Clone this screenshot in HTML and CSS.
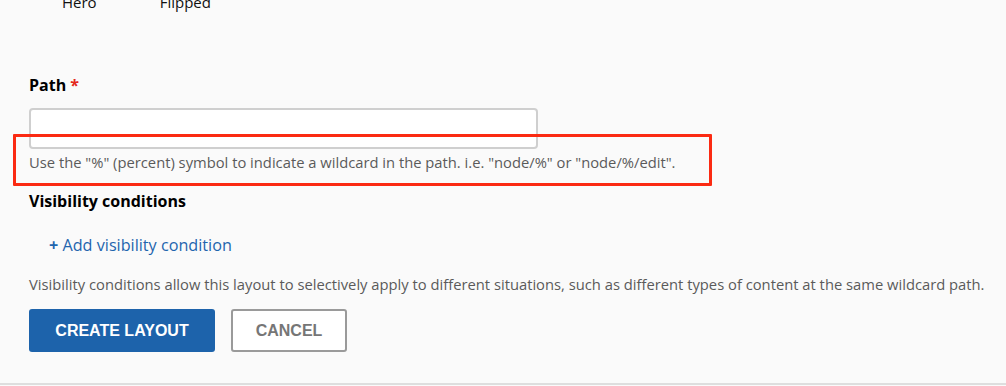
FILE: index.html
```html
<!DOCTYPE html>
<html lang="en">
<head>
<meta charset="utf-8">
<title>Layout</title>
<link rel="stylesheet" href="styles.css">
</head>
<body>
<div class="page">
  <div class="layouts">
    <span class="layout-name hero">Hero</span>
    <span class="layout-name flipped">Flipped</span>
  </div>

  <div class="field path-field">
    <label class="label">Path <span class="req">*</span></label>
    <input class="text-input" type="text">
    <div class="help">Use the "%" (percent) symbol to indicate a wildcard in the path. i.e. "node/%" or "node/%/edit".</div>
    <div class="annotation"></div>
  </div>

  <div class="field vis-field">
    <div class="label">Visibility conditions</div>
    <a class="add-link" href="#"><span class="plus">+</span> Add visibility condition</a>
    <div class="help desc">Visibility conditions allow this layout to selectively apply to different situations, such as different types of content at the same wildcard path.</div>
  </div>

  <div class="actions">
    <button class="btn btn-primary">CREATE LAYOUT</button>
    <button class="btn btn-secondary">CANCEL</button>
  </div>
</div>
</body>
</html>
```

FILE: styles.css
```css
html, body {
  margin: 0;
  padding: 0;
  background: #fafafa;
}
body {
  font-family: "Open Sans", "Liberation Sans", sans-serif;
  color: #111;
  height: 386px;
  overflow: hidden;
}
.page {
  display: flow-root;
  padding-left: 29px;
  height: 385px;
  border-bottom: 2px solid #dedede;
  box-sizing: border-box;
}
.layouts {
  display: flex;
  margin-top: -8px;
  height: 20px;
  font-size: 15px;
  line-height: 20px;
  color: #111;
}
.hero { margin-left: 33px; }
.flipped { margin-left: 63px; }

.field { display: flex; flex-direction: column; align-items: flex-start; }
.path-field { position: relative; margin-top: 62px; }
.label {
  font-size: 16px;
  font-weight: 700;
  line-height: 22px;
  color: #000;
}
.req { color: #e4281b; }
.text-input {
  margin-top: 12px;
  width: 509px;
  height: 41px;
  box-sizing: border-box;
  border: 2px solid #cfcfcf;
  border-radius: 4px;
  background: #fff;
  padding: 0 8px;
  font: inherit;
}
.help {
  font-size: 14.75px;
  line-height: 20px;
  color: #5a5a5a;
  margin-top: 3px;
  white-space: nowrap;
}
.annotation {
  position: absolute;
  left: -16px;
  top: 60px;
  width: 699px;
  height: 52px;
  box-sizing: border-box;
  border: 3px solid #fb2a12;
  border-radius: 1px;
  pointer-events: none;
}
.vis-field { margin-top: 18px; }
.add-link {
  margin-top: 22px;
  margin-left: 20px;
  font-size: 16.2px;
  line-height: 22px;
  color: #1f65ae;
  text-decoration: none;
}
.plus { font-weight: 700; }
.desc { margin-top: 18px; }

.actions {
  display: flex;
  gap: 16px;
  margin-top: 15px;
}
.btn {
  font-family: "Liberation Sans", Arial, sans-serif;
  font-size: 16px;
  font-weight: 700;
  height: 43px;
  box-sizing: border-box;
  border-radius: 3px;
  cursor: pointer;
  padding: 0;
}
.btn-primary {
  width: 186px;
  background: #1d63ab;
  color: #fff;
  border: none;
}
.btn-secondary {
  width: 116px;
  background: #fff;
  color: #767676;
  border: 2px solid #9a9a9a;
}
```
